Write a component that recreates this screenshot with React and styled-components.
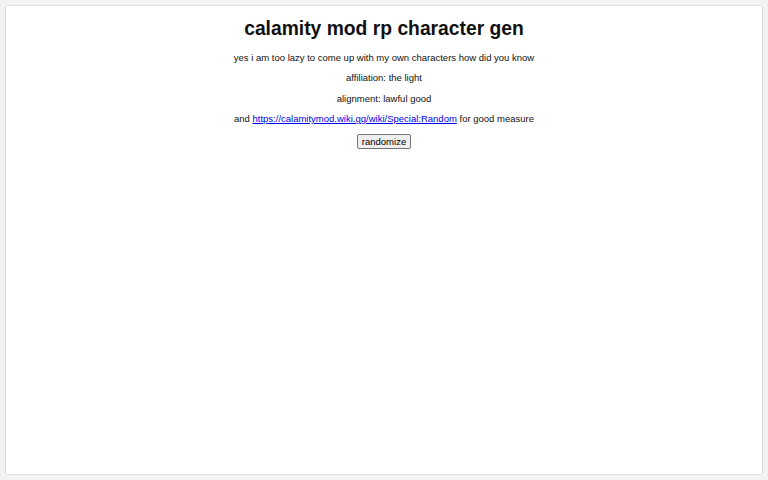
import React, { useState } from 'react'
import styled, { createGlobalStyle } from 'styled-components'

const GlobalStyle = createGlobalStyle`
  html, body {
    margin: 0;
    padding: 0;
    background: #f3f3f3;
  }
  body {
    padding: 5px;
    font-family: "Liberation Sans", Arial, sans-serif;
  }
`

const Card = styled.main`
  box-sizing: border-box;
  height: 470px;
  background: #fff;
  border: 1px solid #dcdcdc;
  border-radius: 2px;
  text-align: center;
  padding-top: 12px;
  color: #111;
`

const Title = styled.h1`
  font-size: 19.3px;
  font-weight: bold;
  margin: 0 0 12px;
`

const Line = styled.p`
  font-size: 9.5px;
  line-height: 11px;
  margin: 0 0 9.4px;

  &:last-of-type {
    margin-bottom: 7px;
  }
`

const Button = styled.button`
  font-family: "Liberation Sans", Arial, sans-serif;
  font-size: 9.5px;
  padding: 1px 4px;
  background: #efefef;
  border: 1px solid #767676;
  border-radius: 2px;
  color: #000;
`

const affiliations = ['the light', 'the dark', 'the abyss', 'the sulphurous sea', 'the brimstone crags']
const alignments = ['lawful good', 'neutral good', 'chaotic good', 'lawful neutral', 'true neutral', 'chaotic neutral', 'lawful evil', 'neutral evil', 'chaotic evil']

const pick = (list) => list[Math.floor(Math.random() * list.length)]

const App = () => {
  const [affiliation, setAffiliation] = useState('the light')
  const [alignment, setAlignment] = useState('lawful good')

  const randomize = () => {
    setAffiliation(pick(affiliations))
    setAlignment(pick(alignments))
  }

  return (
    <>
      <GlobalStyle />
      <Card>
        <Title>calamity mod rp character gen</Title>
        <Line>yes i am too lazy to come up with my own characters how did you know</Line>
        <Line>affiliation: {affiliation}</Line>
        <Line>alignment: {alignment}</Line>
        <Line>
          and <a href="https://calamitymod.wiki.gg/wiki/Special:Random">https://calamitymod.wiki.gg/wiki/Special:Random</a> for good measure
        </Line>
        <Button onClick={randomize}>randomize</Button>
      </Card>
    </>
  )
}

export default App
